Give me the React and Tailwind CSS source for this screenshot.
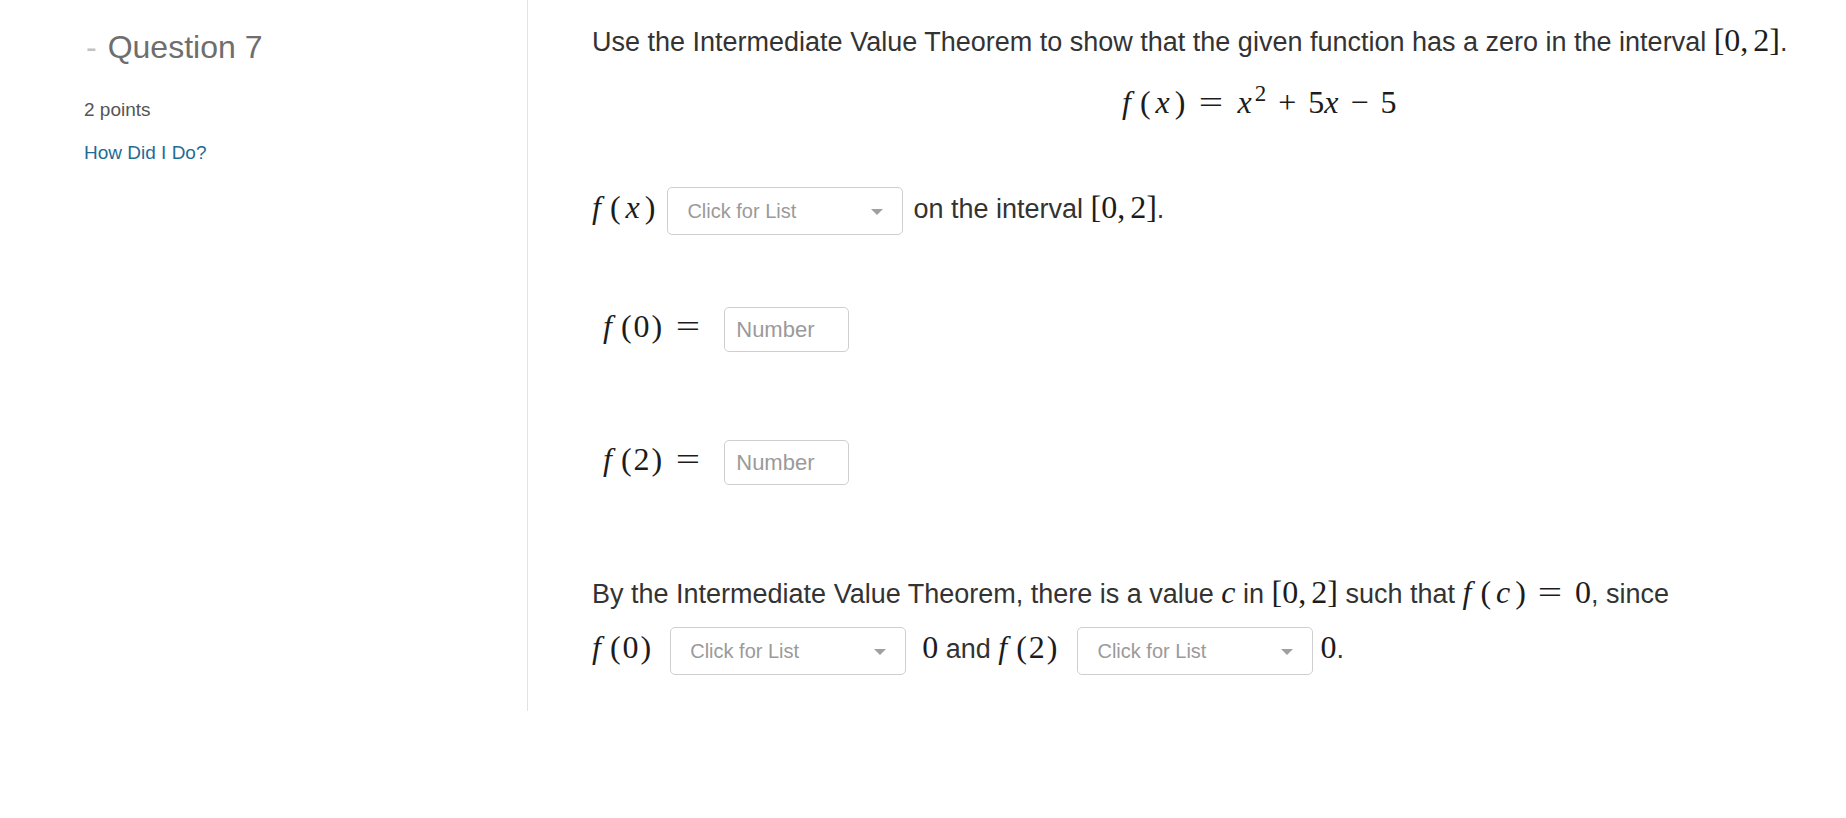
import React from 'react';

const mathCls = "font-['Liberation_Serif','Times_New_Roman',serif] text-[32px] leading-none text-[#1c1c1c]";

const Fn = ({ arg, italic = false }) => (
    <span className={`${mathCls} inline-block whitespace-nowrap`}>
        <span className="italic mr-[9px]">f</span>
        <span>(</span>
        <span className={italic ? 'italic px-[5px]' : 'px-[2px]'}>{arg}</span>
        <span>)</span>
    </span>
);

const Eq = ({ className = '' }) => (
    <span className={`${mathCls} inline-block scale-x-[1.35] ${className}`}>=</span>
);

const Interval = () => (
    <span className={`${mathCls} whitespace-nowrap`}>
        [0,<span className="ml-[5px]">2</span>]
    </span>
);

const Dropdown = ({ className = '' }) => (
    <div className={`w-[236px] h-[48px] shrink-0 border border-[#cfcfcf] rounded-[5px] bg-white flex items-baseline justify-between pl-[19px] pr-[19px] pt-[11px] ${className}`}>
        <span className="text-[20px] leading-[24px] text-[#9a9a9a]">Click for List</span>
        <span className="self-center -mt-[10px] w-0 h-0 border-l-[6px] border-r-[6px] border-t-[6px] border-l-transparent border-r-transparent border-t-[#a0a0a0]" />
    </div>
);

const NumberBox = ({ className = '' }) => (
    <div className={`w-[125px] h-[45px] shrink-0 border border-[#cfcfcf] rounded-[5px] bg-white flex items-baseline pl-[11px] pt-[9px] ${className}`}>
        <span className="text-[22px] leading-[26px] text-[#9a9a9a]">Number</span>
    </div>
);

const App = () => {
    return (
        <div className="w-full min-h-[818px] bg-white font-['Liberation_Sans',Arial,sans-serif] text-[#333]">
            <div className="flex items-start">
                {/* sidebar */}
                <aside className="w-[528px] h-[711px] shrink-0 border-r border-[#e3e3e3] pl-[86px]">
                    <div className="mt-[27px] h-[40px] flex items-center text-[32px] leading-[40px]">
                        <span className="text-[#c2c2c2] mr-[11px]">-</span>
                        <span className="text-[#6e6e6e]">Question 7</span>
                    </div>
                    <p className="mt-[30px] text-[19px] leading-[26px] text-[#555] -ml-[2px]">2 points</p>
                    <p className="mt-[17px] text-[19px] leading-[26px] text-[#1f6c95] -ml-[2px]">How Did I Do?</p>
                </aside>

                {/* question body */}
                <main className="pl-[64px] flex flex-col">
                    <p className="mt-[22px] h-[40px] text-[27px] leading-[40px] whitespace-nowrap">
                        Use the Intermediate Value Theorem to show that the given function has a zero in the interval <Interval />.
                    </p>

                    <div className="mt-[20px] h-[40px] pl-[530px] flex items-baseline whitespace-nowrap">
                        <Fn arg="x" italic />
                        <Eq className="mx-[17px]" />
                        <span className={mathCls}>
                            <span className="italic">x</span>
                            <span className="text-[23px] align-[12px] ml-[3px]">2</span>
                        </span>
                        <span className={`${mathCls} mx-[12px]`}>+</span>
                        <span className={mathCls}>5<span className="italic">x</span></span>
                        <span className={`${mathCls} mx-[12px]`}>−</span>
                        <span className={mathCls}>5</span>
                    </div>

                    <div className="mt-[65px] flex items-baseline">
                        <Fn arg="x" italic />
                        <Dropdown className="ml-[12px]" />
                        <span className="ml-[10px] text-[27px] leading-none whitespace-nowrap">
                            on the interval <Interval />.
                        </span>
                    </div>

                    <div className="mt-[72px] pl-[11px] flex items-baseline">
                        <Fn arg="0" />
                        <Eq className="ml-[17px]" />
                        <NumberBox className="ml-[27px]" />
                    </div>

                    <div className="mt-[88px] pl-[11px] flex items-baseline">
                        <Fn arg="2" />
                        <Eq className="ml-[17px]" />
                        <NumberBox className="ml-[27px]" />
                    </div>

                    <p className="mt-[89px] h-[40px] text-[27px] leading-[40px] whitespace-nowrap">
                        By the Intermediate Value Theorem, there is a value <span className={`${mathCls} italic`}>c</span> in <Interval /> such that <Fn arg="c" italic /> <Eq className="mx-[8px]" /> <span className={mathCls}>0</span>, since
                    </p>

                    <div className="mt-[13px] flex items-baseline">
                        <Fn arg="0" />
                        <Dropdown className="ml-[19px]" />
                        <span className="ml-[16px] text-[27px] leading-none whitespace-nowrap">
                            <span className={mathCls}>0</span> and <Fn arg="2" />
                        </span>
                        <Dropdown className="ml-[20px]" />
                        <span className="ml-[7px] text-[27px] leading-none whitespace-nowrap">
                            <span className={mathCls}>0</span>.
                        </span>
                    </div>
                </main>
            </div>
        </div>
    );
};

export default App;
